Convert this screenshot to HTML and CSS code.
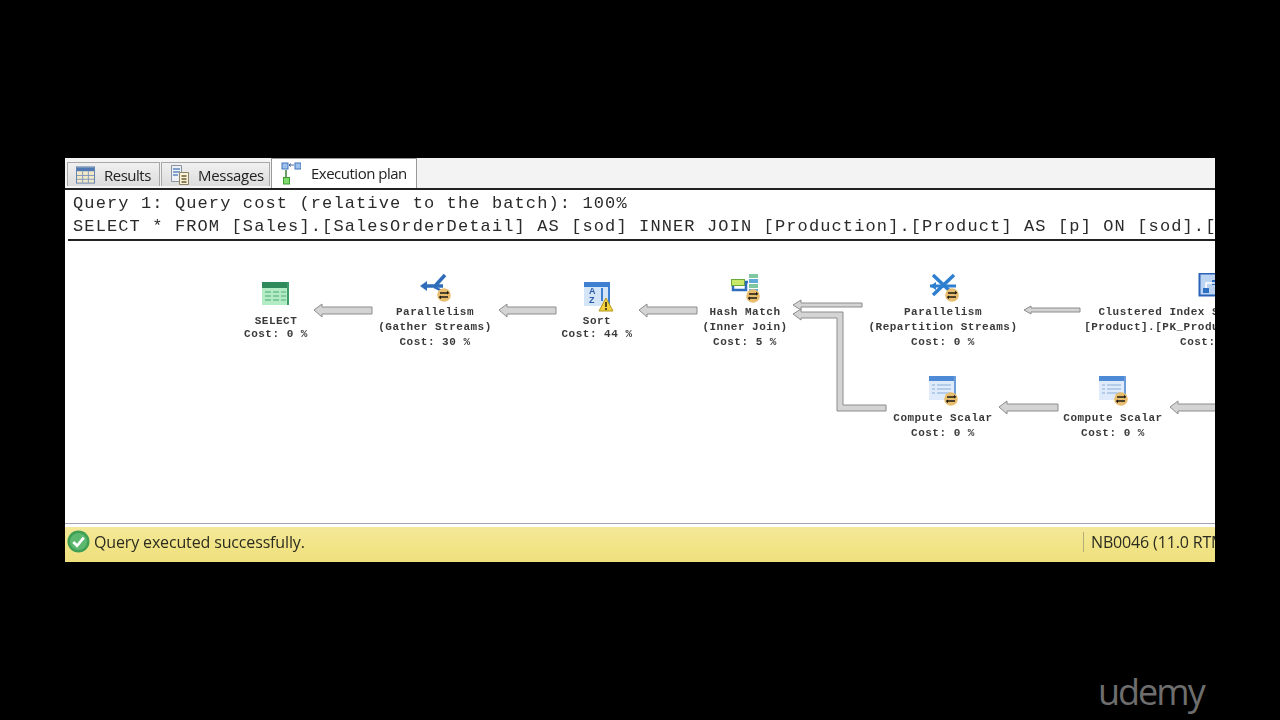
FILE: index.html
```html
<!DOCTYPE html>
<html lang="en">
<head>
    <meta charset="UTF-8">
    <title>Execution plan</title>
    <link rel="stylesheet" href="styles.css">
</head>
<body>
    <svg class="sprite" aria-hidden="true">
        <symbol id="badge" viewBox="0 0 14 14">
            <circle cx="7" cy="7" r="6.800" fill="#e9bd6e"/>
            <path d="M3 5h8M3 9h8" stroke="#1c1c14" stroke-width="1.400"/>
            <path d="M10 2.800L12.400 5 10 6.600zM4 7.400L1.600 9 4 11.200z" fill="#1c1c14"/>
        </symbol>
        <symbol id="compute" viewBox="0 0 27 24">
            <rect width="27" height="24" fill="#dfeafa"/>
            <rect width="27" height="5" fill="#4f8ad6"/>
            <rect x="25" width="2" height="24" fill="#6d9ddb"/>
            <path d="M3 9h3M8 9h14M3 13h3M8 13h14M3 17h3M8 17h14" stroke="#a5c2e4" stroke-width="1.500"/>
        </symbol>
    </svg>

    <div class="window">
        <div class="tabs">
            <div class="tab">
                <svg class="tab-icon" viewBox="0 0 20 18">
                    <rect x="0.500" y="0.500" width="19" height="17" fill="#f3e9c9" stroke="#5f80ad"/>
                    <rect x="1" y="1" width="18" height="4" fill="#4f78b4"/>
                    <path d="M7 5v12M13 5v12M1 9.500h18M1 13.500h18" stroke="#7d97ba"/>
                </svg>
                <span>Results</span>
            </div>
            <div class="tab tab-messages">
                <svg class="tab-icon tab-icon-doc" viewBox="0 0 20 20">
                    <path d="M1.500 0.500h10v16h-10z" fill="#eef1f5" stroke="#8a93a0"/>
                    <path d="M3 4h7M3 7h7M3 10h5" stroke="#5f87bd" stroke-width="1.300"/>
                    <path d="M9.500 7.500h9v12h-9z" fill="#fbf3d9" stroke="#8d8468"/>
                    <path d="M11.500 11h5M11.500 14h5M11.500 17h5" stroke="#6a5a2d" stroke-width="1.300"/>
                </svg>
                <span>Messages</span>
            </div>
            <div class="tab tab-active">
                <svg class="plan-icon" viewBox="0 0 20 24">
                    <rect x="1" y="1" width="6" height="6" fill="#9cc2ec" stroke="#3f73bd"/>
                    <rect x="14" y="1" width="6" height="6" fill="#9cc2ec" stroke="#3f73bd"/>
                    <path d="M8 3h5M8 3l2-1.500M8 3l2 1.500" stroke="#44699e" fill="none"/>
                    <path d="M5 8v7" stroke="#3d7c3d" stroke-width="1.500"/>
                    <rect x="2.500" y="15.500" width="6" height="6.500" fill="#7fdc6a" stroke="#3f9a34"/>
                </svg>
                <span>Execution plan</span>
            </div>
            <div class="tabs-rest"></div>
        </div>

        <div class="query-head">
            <div>Query 1: Query cost (relative to the batch): 100%</div>
            <div>SELECT * FROM [Sales].[SalesOrderDetail] AS [sod] INNER JOIN [Production].[Product] AS [p] ON [sod].[ProductID] = [p].[ProductID]</div>
        </div>

        <div class="plan">
            <svg class="arrows" viewBox="65 241 1150 282">
                <polygon points="314,310 322,304 322,307 372,307 372,314 322,314 322,317"/>
                <polygon points="499,310 507,304 507,307 556,307 556,314 507,314 507,317"/>
                <polygon points="639,310 647,304 647,307 697,307 697,314 647,314 647,317"/>
                <polygon points="793,305 801,300 801,303 862,303 862,307 801,307 801,310"/>
                <polygon points="793,314 801,309 801,312 843,312 843,405 886,405 886,411 837,411 837,318 801,318 801,320"/>
                <polygon points="1024,310 1031,306 1031,308 1080,308 1080,312 1031,312 1031,314"/>
                <polygon points="999,407 1007,401 1007,404 1058,404 1058,411 1007,411 1007,414"/>
                <polygon points="1170,407 1178,401 1178,404 1230,404 1230,411 1178,411 1178,414"/>
            </svg>

            <div class="node node-select node-tight">
                <svg class="node-icon" viewBox="0 0 36 30">
                    <rect x="4" width="27" height="23" fill="#b3ecc4"/>
                    <rect x="4" width="27" height="6" fill="#2f8a5c"/>
                    <rect x="29" width="2" height="23" fill="#3d9c6a"/>
                    <path d="M7 10h6M15 10h6M23 10h5M7 14h6M15 14h6M23 14h5M7 18h6M15 18h6M23 18h5" stroke="#6fc08e" stroke-width="1.500"/>
                </svg>
                <div>SELECT</div>
                <div>Cost: 0 %</div>
            </div>

            <div class="node node-gather">
                <svg class="node-icon" viewBox="0 0 36 30">
                    <path d="M6 13h20M18 13L28 2" stroke="#2f6cba" stroke-width="3.500" fill="none"/>
                    <path d="M17 14L27 19" stroke="#2f6cba" stroke-width="2.500"/>
                    <path d="M3 13L10 8v10z" fill="#2f6cba"/>
                    <use href="#badge" x="20" y="15" width="14" height="14"/>
                </svg>
                <div>Parallelism</div>
                <div>(Gather Streams)</div>
                <div>Cost: 30 %</div>
            </div>

            <div class="node node-sort node-tight">
                <svg class="node-icon" viewBox="0 0 36 30">
                    <rect x="5" width="26" height="24" fill="#d5e5f8"/>
                    <rect x="5" width="26" height="5" fill="#3f7fd0"/>
                    <rect x="29" width="2" height="24" fill="#3f7fd0"/>
                    <text class="sort-letter" x="10" y="12">A</text>
                    <text class="sort-letter" x="10" y="21">Z</text>
                    <path d="M23 6v13" stroke="#3f7fd0" stroke-width="2"/>
                    <path d="M34 29L27 16l-7 13z" fill="#f4d23e" stroke="#b3961f"/>
                    <path d="M27 20v5M27 26v2" stroke="#30280c" stroke-width="1.600"/>
                </svg>
                <div>Sort</div>
                <div>Cost: 44 %</div>
            </div>

            <div class="node node-hash">
                <svg class="node-icon" viewBox="0 0 36 30">
                    <rect x="4.500" y="6.500" width="13" height="6" fill="#c9e86a" stroke="#6aa83a"/>
                    <path d="M6 13v4h13v-8h2" stroke="#2f6cba" stroke-width="2.500" fill="none"/>
                    <rect x="22" y="1" width="9" height="4" fill="#7fc7a0"/>
                    <rect x="22" y="6" width="9" height="4" fill="#5fa9d8"/>
                    <rect x="22" y="11" width="9" height="4" fill="#7fc7a0"/>
                    <rect x="22" y="16" width="9" height="4" fill="#5fa9d8"/>
                    <use href="#badge" x="19" y="16" width="14" height="14"/>
                </svg>
                <div>Hash Match</div>
                <div>(Inner Join)</div>
                <div>Cost: 5 %</div>
            </div>

            <div class="node node-repartition">
                <svg class="node-icon" viewBox="0 0 36 30">
                    <path d="M8 2L29 22M29 2L8 22" stroke="#2f7fd0" stroke-width="3.500"/>
                    <path d="M5 13h26" stroke="#2f7fd0" stroke-width="3"/>
                    <path d="M5 13l6-4v8z" fill="#2f7fd0"/>
                    <use href="#badge" x="20" y="15" width="14" height="14"/>
                </svg>
                <div>Parallelism</div>
                <div>(Repartition Streams)</div>
                <div>Cost: 0 %</div>
            </div>

            <div class="node node-clustered">
                <svg class="node-icon" viewBox="0 0 36 30">
                    <rect x="5.500" y="0.500" width="25" height="22" fill="#bcd4f2" stroke="#2a62b8" stroke-width="2"/>
                    <path d="M9 15h6v5H9zM18 7h6v5h-6z" fill="#2f6fc4"/>
                    <path d="M12 15v-5h9" stroke="#fff" stroke-width="1.500" fill="none"/>
                </svg>
                <div>Clustered Index Scan (Clustered)</div>
                <div>[Product].[PK_Product_ProductID] [p]</div>
                <div>Cost: 0 %</div>
            </div>

            <div class="node node-compute-a">
                <svg class="node-icon node-icon-tall" viewBox="0 0 36 33">
                    <use href="#compute" x="4" y="0" width="27" height="24"/>
                    <use href="#badge" x="19" y="16" width="14" height="14"/>
                </svg>
                <div>Compute Scalar</div>
                <div>Cost: 0 %</div>
            </div>

            <div class="node node-compute-b">
                <svg class="node-icon node-icon-tall" viewBox="0 0 36 33">
                    <use href="#compute" x="4" y="0" width="27" height="24"/>
                    <use href="#badge" x="19" y="16" width="14" height="14"/>
                </svg>
                <div>Compute Scalar</div>
                <div>Cost: 0 %</div>
            </div>
        </div>

        <div class="status">
            <svg class="status-icon" viewBox="0 0 24 24">
                <circle cx="12" cy="12" r="11.500" fill="#3f9f55"/>
                <circle cx="12" cy="12" r="9" fill="#5cb86e"/>
                <path d="M6.500 12.500l4 4 7-8.500" stroke="#fff" stroke-width="2.800" fill="none"/>
            </svg>
            <span class="status-text">Query executed successfully.</span>
            <span class="status-server">NB0046 (11.0 RTM)</span>
        </div>
    </div>

    <div class="watermark">udemy</div>
</body>
</html>
```

FILE: styles.css
```css
body {
    margin: 0;
    height: 720px;
    background-color: #000;
    overflow: hidden;
}

.sprite {
    position: absolute;
    width: 0;
    height: 0;
}

.window {
    width: 1150px;
    height: 404px;
    margin: 158px 0 0 65px;
    background-color: #fff;
    display: flex;
    flex-direction: column;
    overflow: hidden;
    filter: blur(0.5px);
}

/* tabs */
.tabs {
    height: 30px;
    display: flex;
    align-items: flex-end;
    flex-shrink: 0;
    padding-left: 2px;
    background-color: #f3f3f3;
    border-bottom: 2px solid #222;
    font-family: "Open Sans", sans-serif;
    font-size: 15px;
    letter-spacing: -0.5px;
    color: #222;
}

.tab {
    height: 24px;
    width: 93px;
    margin: 0 1px 2px 0;
    box-sizing: border-box;
    display: flex;
    align-items: center;
    padding-left: 8px;
    gap: 9px;
    background: linear-gradient(#f0f0f0, #dcdcdc);
    border: 1px solid #a8a8a8;
    border-bottom: none;
}

.tab-messages {
    width: 109px;
    gap: 8px;
    letter-spacing: -0.3px;
}

.tab-active {
    height: 30px;
    width: 146px;
    margin-bottom: 0;
    padding-left: 9px;
    gap: 10px;
    background: #fff;
    border-color: #999;
    align-items: flex-start;
    padding-top: 3px;
}

.tab-active span {
    margin-top: 1px;
}

.tabs-rest {
    flex: 1;
}

.tab-icon {
    width: 19px;
    height: 18px;
    flex-shrink: 0;
}

.tab-icon-doc {
    width: 20px;
    height: 20px;
}

.plan-icon {
    width: 20px;
    height: 24px;
    flex-shrink: 0;
}

/* query text */
.query-head {
    height: 51px;
    flex-shrink: 0;
    margin-left: 3px;
    padding: 2px 0 0 5px;
    box-sizing: border-box;
    border-bottom: 2px solid #222;
    font-family: "Liberation Mono", monospace;
    font-size: 17px;
    letter-spacing: 1.12px;
    line-height: 23px;
    color: #2a2a2a;
    white-space: nowrap;
    overflow: hidden;
}

/* plan canvas */
.plan {
    position: relative;
    flex: 1;
    overflow: hidden;
    font-family: "Liberation Mono", monospace;
    font-size: 11px;
    font-weight: bold;
    letter-spacing: 0.5px;
    line-height: 15px;
    color: #3a3a3a;
}

.arrows {
    position: absolute;
    left: 0;
    top: 0;
    width: 1150px;
    height: 282px;
}

.arrows polygon {
    fill: #d4d4d4;
    stroke: #8c8c8c;
    stroke-width: 1;
}

.node {
    position: absolute;
    width: 280px;
    top: 32px;
    text-align: center;
    white-space: nowrap;
}

.node-tight {
    top: 41px;
    line-height: 13px;
}

.node-icon {
    display: block;
    width: 36px;
    height: 30px;
    margin: 0 auto 2px;
}

.node-tight .node-icon {
    margin-bottom: 3px;
}

.node-icon-tall {
    height: 33px;
}

.node-select { left: 71px; }
.node-gather { left: 230px; }
.node-sort { left: 392px; }
.node-hash { left: 540px; }
.node-repartition { left: 738px; }
.node-clustered { left: 1007px; }
.node-compute-a { left: 738px; top: 135px; }
.node-compute-b { left: 908px; top: 135px; }

.sort-letter {
    font-family: "Liberation Sans", sans-serif;
    font-size: 9px;
    font-weight: bold;
    letter-spacing: 0;
    fill: #2a5da8;
}

/* status bar */
.status {
    height: 39px;
    flex-shrink: 0;
    box-sizing: border-box;
    display: flex;
    align-items: center;
    padding: 0 0 3px 2px;
    border-top: 1px solid #a2a2b0;
    background: linear-gradient(#fff 0, #fff 3px, #f4e89a 3px, #f1e486 60%, #efe07e 100%);
    font-family: "Open Sans", sans-serif;
    font-size: 16px;
    letter-spacing: -0.15px;
    color: #2c2c20;
    white-space: nowrap;
}

.status-icon {
    width: 23px;
    height: 23px;
    flex-shrink: 0;
}

.status-text {
    margin-left: 4px;
}

.status-server {
    margin-left: auto;
    width: 124px;
    padding-left: 7px;
    flex-shrink: 0;
    border-left: 1px solid #b5ad78;
    line-height: 20px;
    overflow: hidden;
}

/* udemy mark over the video */
.watermark {
    position: absolute;
    left: 1098px;
    top: 667px;
    font-family: "Open Sans", sans-serif;
    font-size: 36px;
    letter-spacing: -2px;
    color: #6e6e6e;
}
```
